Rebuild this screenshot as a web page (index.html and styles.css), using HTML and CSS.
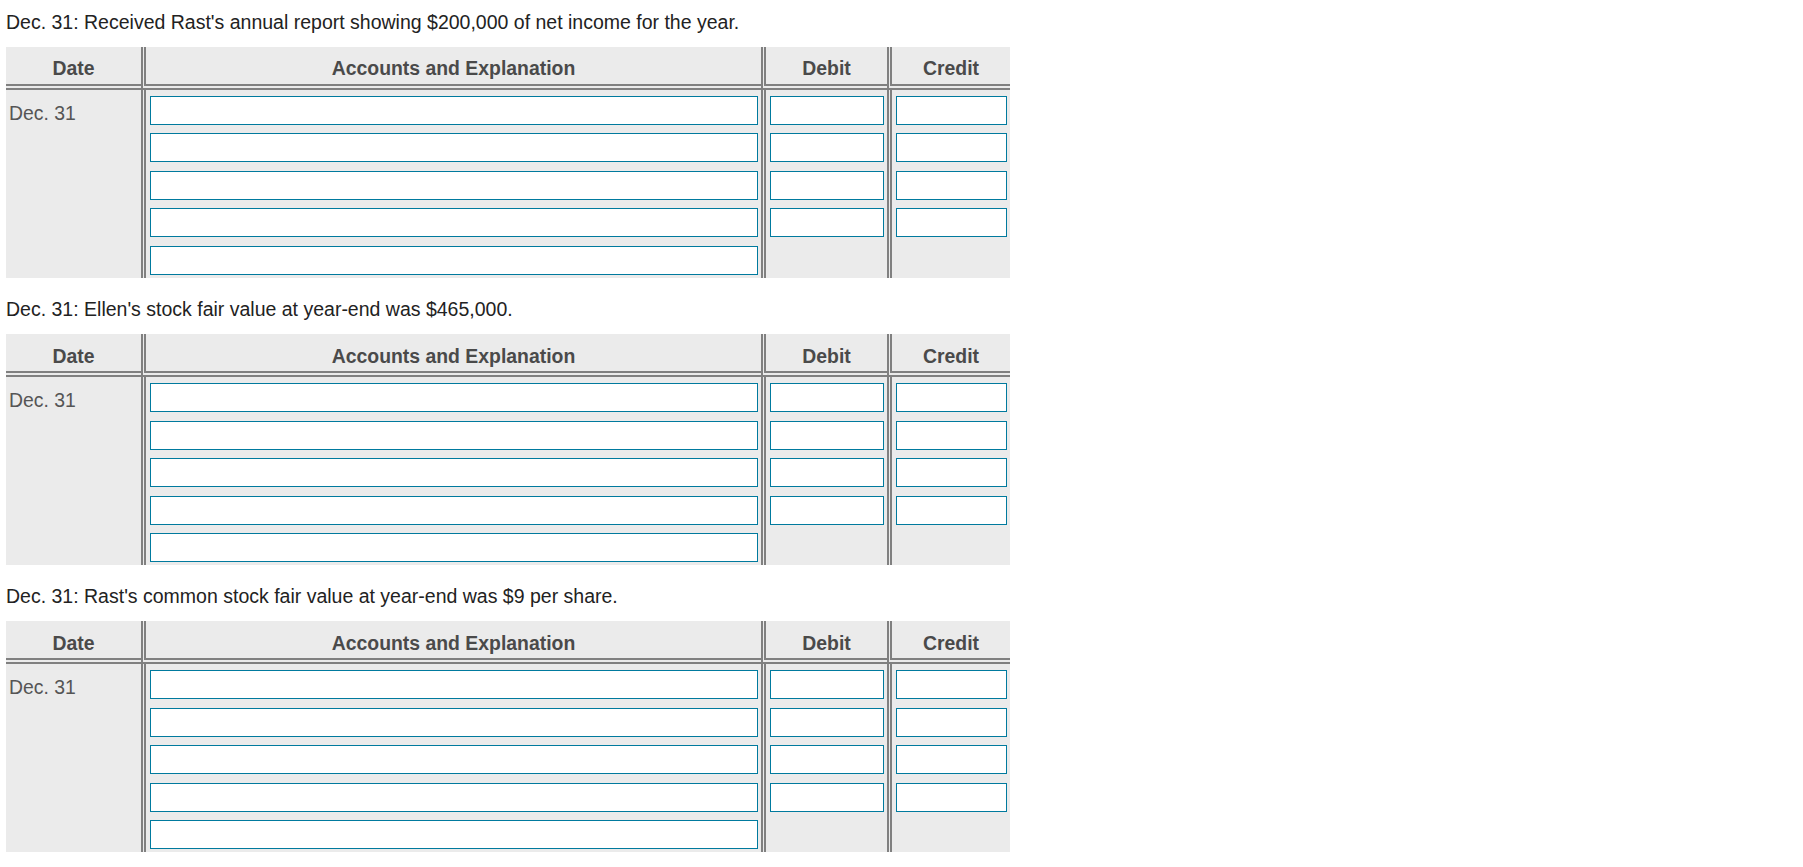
FILE: index.html
```html
<!DOCTYPE html>
<html>
<head>
<meta charset="utf-8">
<link rel="stylesheet" href="styles.css">
</head>
<body>
<div class="page">
  <section class="block">
    <p class="desc">Dec. 31: Received Rast's annual report showing $200,000 of net income for the year.</p>
    <div class="journal">
      <div class="jh c-date">Date</div>
      <div class="jh c-line">Accounts and Explanation</div>
      <div class="jh c-line">Debit</div>
      <div class="jh c-line">Credit</div>
      <div class="jb c-date"><span class="date">Dec. 31</span></div>
      <div class="jb c-line"><input class="field"><input class="field"><input class="field"><input class="field"><input class="field"></div>
      <div class="jb c-line"><input class="field"><input class="field"><input class="field"><input class="field"></div>
      <div class="jb c-line"><input class="field"><input class="field"><input class="field"><input class="field"></div>
    </div>
  </section>
  <section class="block">
    <p class="desc">Dec. 31: Ellen's stock fair value at year-end was $465,000.</p>
    <div class="journal">
      <div class="jh c-date">Date</div>
      <div class="jh c-line">Accounts and Explanation</div>
      <div class="jh c-line">Debit</div>
      <div class="jh c-line">Credit</div>
      <div class="jb c-date"><span class="date">Dec. 31</span></div>
      <div class="jb c-line"><input class="field"><input class="field"><input class="field"><input class="field"><input class="field"></div>
      <div class="jb c-line"><input class="field"><input class="field"><input class="field"><input class="field"></div>
      <div class="jb c-line"><input class="field"><input class="field"><input class="field"><input class="field"></div>
    </div>
  </section>
  <section class="block">
    <p class="desc">Dec. 31: Rast's common stock fair value at year-end was $9 per share.</p>
    <div class="journal">
      <div class="jh c-date">Date</div>
      <div class="jh c-line">Accounts and Explanation</div>
      <div class="jh c-line">Debit</div>
      <div class="jh c-line">Credit</div>
      <div class="jb c-date"><span class="date">Dec. 31</span></div>
      <div class="jb c-line"><input class="field"><input class="field"><input class="field"><input class="field"><input class="field"></div>
      <div class="jb c-line"><input class="field"><input class="field"><input class="field"><input class="field"></div>
      <div class="jb c-line"><input class="field"><input class="field"><input class="field"><input class="field"></div>
    </div>
  </section>
</div>
</body>
</html>
```
FILE: styles.css
```css
html, body {
  margin: 0;
  padding: 0;
  background: #ffffff;
}
body {
  font-family: "Liberation Sans", Arial, sans-serif;
  font-size: 19.4px;
  color: #262626;
}
.page {
  padding: 10.8px 6px 0 6px;
}
.block {
  margin: 0 0 20.3px 0;
}
.desc {
  margin: 0 0 14.2px 0;
  font-size: 19.5px;
  line-height: 22px;
  color: #222222;
}
.journal {
  width: 1004px;
  display: grid;
  grid-template-columns: 135px 620px 126px 123px;
  background: #ebebeb;
}
.jh {
  height: 43px;
  box-sizing: border-box;
  border-bottom: 6px double #808080;
  padding-top: 9.4px;
  line-height: 24px;
  text-align: center;
  font-weight: bold;
  color: #4a4a4a;
}
.c-line {
  border-left: 5px double #808080;
}
.jb {
  box-sizing: border-box;
  padding: 6px 3.5px 2.7px 3.5px;
  display: flex;
  flex-direction: column;
  gap: 8.5px;
}
.jb.c-date {
  padding: 11px 3px 0 3px;
  line-height: 24px;
}
.date {
  color: #555555;
}
.field {
  display: block;
  box-sizing: border-box;
  width: 100%;
  height: 29px;
  margin: 0;
  padding: 0 4px;
  border: 1px solid #007a9e;
  border-radius: 0;
  background: #ffffff;
  font: inherit;
  outline: none;
}
```
